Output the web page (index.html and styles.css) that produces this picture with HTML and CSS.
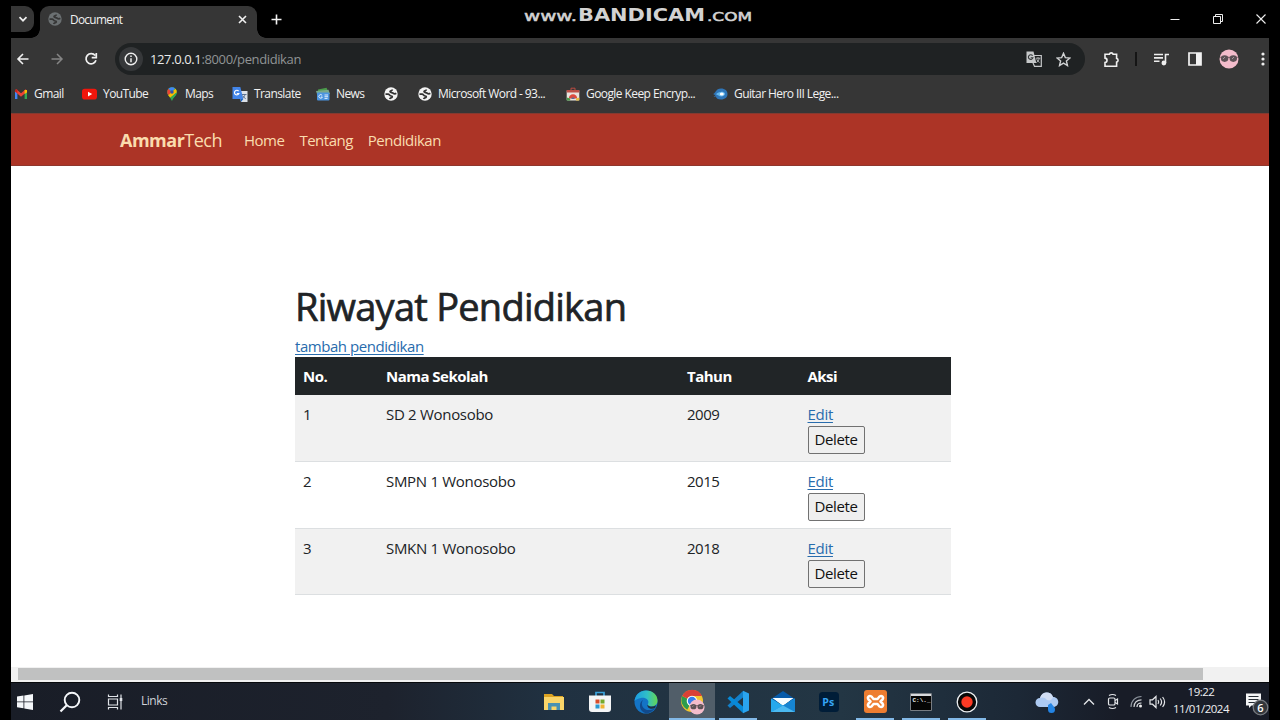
FILE: index.html
```html
<!DOCTYPE html>
<html lang="id">
<head>
<meta charset="utf-8">
<title>Document</title>
<link rel="stylesheet" href="styles.css">
</head>
<body>
<svg class="defs" aria-hidden="true">
  <defs>
    <symbol id="globe" viewBox="0 0 14 14"><circle cx="7" cy="7" r="6.700" fill="currentColor"/><path d="M1.500 7.200h2.700c1.300 0 1.400 1.700 3 1.800 1 .1 1.500.8.700 1.500-.6.600-1.900.3-2.300 1.600M12.300 6.300c-1.300.9-2.500.4-3.500-.3-1-.7-2.600-.1-2.800-1.300-.2-1 2.200-.7 2.400-2.200" fill="none" stroke="var(--cut)" stroke-width="1.700"/></symbol>
    <symbol id="glasses" viewBox="0 0 20 20"><circle cx="10" cy="10" r="9.500" fill="#f3bccb"/><path d="M1.300 8.300h17.400" stroke="#6d5058" stroke-width="1"/><ellipse cx="5.600" cy="9.600" rx="3.700" ry="3.300" fill="#5d5156"/><ellipse cx="14.300" cy="9.600" rx="3.700" ry="3.300" fill="#5d5156"/><path d="M4 10l2-2M13 10l2-2" stroke="#a99a9e"/></symbol>
  </defs>
</svg>
<div class="screen">
  <header class="tabstrip">
    <button class="tab-search"><svg width="10" height="10" viewBox="0 0 10 10"><path d="M1.500 3.200L5 6.700l3.500-3.500" fill="none" stroke="#eee" stroke-width="1.700"/></svg></button>
    <div class="tab">
      <svg class="tab-globe" width="14" height="14"><use href="#globe"/></svg>
      <span class="tab-title">Document</span>
      <svg class="tab-close" width="9" height="9" viewBox="0 0 9 9"><path d="M1 1l7 7M8 1L1 8" stroke="#f0f0f0" stroke-width="1.600"/></svg>
    </div>
    <svg class="tab-new" width="11" height="11" viewBox="0 0 11 11"><path d="M5.500.5v10M.5 5.500h10" stroke="#f2f2f2" stroke-width="1.600"/></svg>
    <svg class="watermark" width="240" height="26" viewBox="0 0 240 26"><g fill="#d2d2d2" font-family="DejaVu Sans, sans-serif" font-weight="bold"><text x="4" y="18" font-size="14" font-weight="normal" stroke="#d2d2d2" stroke-width=".5" textLength="53" lengthAdjust="spacingAndGlyphs">www.</text><text x="58" y="18" font-size="18" textLength="127" lengthAdjust="spacingAndGlyphs">BANDICAM</text><text x="187" y="18" font-size="13" font-weight="normal" stroke="#d2d2d2" stroke-width=".6" textLength="45" lengthAdjust="spacingAndGlyphs">.COM</text></g></svg>
    <div class="window-buttons">
      <svg width="12" height="12" viewBox="0 0 12 12"><path d="M1.500 6.500h9" stroke="#eee"/></svg>
      <svg width="12" height="12" viewBox="0 0 12 12"><path d="M1.500 3.500h7v7h-7zM3.500 3.500v-2h7v7h-2" fill="none" stroke="#eee"/></svg>
      <svg width="12" height="12" viewBox="0 0 12 12"><path d="M1.500 1.500l9 9M10.500 1.500l-9 9" stroke="#eee" stroke-width="1.100"/></svg>
    </div>
  </header>

  <div class="toolbar">
    <svg width="14" height="14" viewBox="0 0 14 14"><path d="M12.500 7H2.500M7 2L2 7l5 5" fill="none" stroke="#f1f1f1" stroke-width="1.600"/></svg>
    <svg width="14" height="14" viewBox="0 0 14 14"><path d="M1.500 7h10M7 2l5 5-5 5" fill="none" stroke="#858585" stroke-width="1.500"/></svg>
    <svg width="14" height="14" viewBox="0 0 14 14"><path d="M11.200 3.600A5.100 5.100 0 1 0 12 8.300M12.300 1v4.700H7.700" fill="none" stroke="#f1f1f1" stroke-width="1.700"/></svg>
    <div class="address">
      <span class="info"><svg width="14" height="14" viewBox="0 0 14 14"><circle cx="7" cy="7" r="5.800" fill="none" stroke="#eee" stroke-width="1.400"/><path d="M7 6.200v4M7 3.600v1.500" stroke="#eee" stroke-width="1.500"/></svg></span>
      <span class="url"><b>127.0.0.1</b>:8000/pendidikan</span>
      <svg class="translate" width="16" height="16" viewBox="0 0 16 16"><path d="M8 4.500h7.300v10.800H8.500L7 12" fill="none" stroke="#c6c8c9" stroke-width="1.200"/><path d="M.5.500h7l2.800 11.500H.5z" fill="#c6c8c9"/><path d="M6.600 4.800a2.300 2.300 0 1 0 .3 2H4.700" fill="none" stroke="#34383a" stroke-width="1.100"/><path d="M9.800 7.200h4.500M12 6.200v1M13.200 7.500c-.5 2-1.500 3.200-2.800 4M10.800 8.200c.4 1.300 1.400 2.500 2.700 3.200" fill="none" stroke="#c6c8c9" stroke-width=".9"/></svg>
      <svg width="15" height="15" viewBox="0 0 14 14"><path d="M7 1.200l1.700 4 4.300.4-3.300 2.800 1 4.200L7 10.400l-3.700 2.200 1-4.200L1 5.600l4.300-.4z" fill="none" stroke="#d0d2d3" stroke-width="1.300"/></svg>
    </div>
    <svg class="ext" width="17" height="17" viewBox="0 0 17 17"><path d="M2 3.300h4.400a1.900 1.900 0 0 1 3.700 0h3.500v4.100a1.900 1.900 0 0 1 0 3.700v4.100H2v-3.600c2.700-.2 2.700-4.300 0-4.500z" fill="none" stroke="#f0f0f0" stroke-width="1.600"/></svg>
    <i class="divider"></i>
    <svg class="media" width="15" height="13" viewBox="0 0 15 13"><path d="M0 1.500h9M0 4.900h9M0 8.300h5.500M11.500 10V1.500H15" fill="none" stroke="#eee" stroke-width="1.600"/><circle cx="9.900" cy="10" r="2.400" fill="#eee"/></svg>
    <svg class="panel" width="14" height="14" viewBox="0 0 14 14"><path d="M1 1h12v12H1z" fill="none" stroke="#f2f2f2" stroke-width="1.700"/><path d="M8 1h5v12H8z" fill="#f2f2f2"/></svg>
    <svg class="avatar" width="20" height="20"><use href="#glasses"/></svg>
    <svg class="kebab" width="4" height="14" viewBox="0 0 4 14" fill="#eee"><circle cx="2" cy="2" r="1.600"/><circle cx="2" cy="7" r="1.600"/><circle cx="2" cy="12" r="1.600"/></svg>
  </div>

  <nav class="bookmarks">
    <a><svg width="14" height="14" viewBox="0 0 14 14"><path d="M2.200 12V3.700" stroke="#4285f4" stroke-width="2.400"/><path d="M11.800 12V3.700" stroke="#34a853" stroke-width="2.400"/><path d="M1.500 3.200L7 8l5.500-4.800" fill="none" stroke="#ea4335" stroke-width="2.500"/><path d="M1 2.400h2.400V6L1 4.500z" fill="#c5221f"/><path d="M10.600 3h2.400v2.500L10.600 7z" fill="#fbbc04"/></svg><span>Gmail</span></a>
    <a><svg width="15" height="14" viewBox="0 0 15 14"><rect y="1.700" width="15" height="10.800" rx="2.800" fill="#f2160c"/><path d="M6 4.700v4.800L10.200 7z" fill="#fff"/></svg><span>YouTube</span></a>
    <a><svg width="14" height="14" viewBox="0 0 14 14"><path d="M7 14C6.500 10.500 2.200 9 2.200 5a4.800 4.800 0 0 1 9.600 0c0 4-4.300 5.500-4.800 9z" fill="#34a853"/><path d="M2.200 5a4.800 4.800 0 0 1 1.200-3.200L7 5 3.300 8.300C2.600 7.300 2.200 6.200 2.200 5z" fill="#ea4335"/><path d="M3.400 1.800A4.800 4.800 0 0 1 10 1.200L7 5z" fill="#4285f4"/><path d="M3.200 8.200L10.500 1.700a4.800 4.800 0 0 1 1.200 4L5.200 10.800z" fill="#fbbc04"/><path d="M5.200 10.800l6.500-5.600c.1 4-4.200 5.300-4.700 8.800-.3-1.300-.9-2.200-1.800-3.200z" fill="#34a853"/><circle cx="7" cy="5" r="1.700" fill="#3155a5"/></svg><span>Maps</span></a>
    <a><svg width="16" height="15" viewBox="0 0 16 15"><path d="M7 4h8.500v11H9z" fill="#dce1e8"/><path d="M.5 0h7.800l3 12H.5z" fill="#4285e9"/><path d="M6.600 4.200a2.300 2.300 0 1 0 .3 2.300H4.800" fill="none" stroke="#fff" stroke-width="1.100"/><path d="M10 7.500h4.500M13 7.500c-.5 2-1.500 3-2.300 3.700M10.700 8.700c.7 1.300 1.800 2.300 3 3" stroke="#5c7291" fill="none"/><path d="M8.500 12h2.800L9 15z" fill="#1764c4"/></svg><span>Translate</span></a>
    <a><svg width="14" height="14" viewBox="0 0 14 14"><path d="M2 2.500L10.500.8 12.500 6H2z" fill="#4b9b4b"/><path d="M0 4l12.500-1.200L14 7H1z" fill="#7aa98a"/><rect x="1" y="5.500" width="12.500" height="8" rx="1" fill="#4b94df"/><path d="M6.200 8.400a1.800 1.800 0 1 0 .2 1.600H5M8.500 8h3.500M8.500 9.700H12M8.500 11.400h3" fill="none" stroke="#eaf5ff" stroke-width=".9"/></svg><span>News</span></a>
    <a class="globe"><svg width="14" height="14"><use href="#globe"/></svg></a>
    <a class="globe"><svg width="14" height="14"><use href="#globe"/></svg><span>Microsoft Word - 93...</span></a>
    <a><svg width="14" height="14" viewBox="0 0 14 14"><path d="M5 3V1.200h4V3" fill="none" stroke="#bd4c42"/><rect x=".7" y="3" width="12.600" height="10.500" rx="1" fill="#e9e5df"/><path d="M.7 3h12.600v2.500H.7z" fill="#bc5148"/><path d="M2.800 11.500a4.200 4.200 0 0 1 8.400 0z" fill="#dd4c40"/><path d="M.7 10.500l3.500 1v2H.7z" fill="#4b9b4b"/><path d="M10 11.500l3.300-1v3H10z" fill="#e6bd43"/><path d="M5.300 12a1.700 1.700 0 0 1 3.400 0z" fill="#5d6f96"/></svg><span>Google Keep Encryp...</span></a>
    <a><svg width="15" height="14" viewBox="0 0 15 14"><path d="M0 7c2.500-.3 2.500-5.500 8-5.500 4 0 6.500 2.300 6.500 5.500s-2.500 5.500-6.500 5.500C5 12.500 3 11.300 3 9.500L.5 10l2-1.700z" fill="#2f76b9"/><path d="M3 7.200c2-2.500 8-3.500 9-.7.500 2.500-4 4-6.500 2z" fill="#66b9ed"/><ellipse cx="8.800" cy="7" rx="2" ry="1.500" fill="#fff"/></svg><span>Guitar Hero III Lege...</span></a>
  </nav>

  <main class="page">
    <nav class="navbar">
      <a class="brand"><b>Ammar</b>Tech</a>
      <a>Home</a>
      <a>Tentang</a>
      <a>Pendidikan</a>
    </nav>
    <section class="content">
      <h1>Riwayat Pendidikan</h1>
      <a class="link add" href="#">tambah pendidikan</a>
      <table>
        <colgroup><col class="c-no"><col class="c-name"><col class="c-year"><col class="c-act"></colgroup>
        <thead><tr><th>No.</th><th>Nama Sekolah</th><th>Tahun</th><th>Aksi</th></tr></thead>
        <tbody>
          <tr><td>1</td><td>SD 2 Wonosobo</td><td class="year">2009</td><td><a class="link" href="#">Edit</a><button>Delete</button></td></tr>
          <tr><td>2</td><td>SMPN 1 Wonosobo</td><td class="year">2015</td><td><a class="link" href="#">Edit</a><button>Delete</button></td></tr>
          <tr><td>3</td><td>SMKN 1 Wonosobo</td><td class="year">2018</td><td><a class="link" href="#">Edit</a><button>Delete</button></td></tr>
        </tbody>
      </table>
    </section>
    <div class="scrollbar"><div class="thumb"></div></div>
  </main>

  <footer class="taskbar">
    <div class="system">
      <svg width="16" height="16" viewBox="0 0 16 16" fill="#f5f7fa"><path d="M0 2.500l6.500-1v6H0zM7.300 1.400L16 0v7.500H7.300zM0 8.300h6.500v6l-6.500-1zM7.300 8.300H16V16l-8.700-1.500z"/></svg>
      <svg width="22" height="22" viewBox="0 0 22 22"><circle cx="13" cy="9" r="7.300" fill="none" stroke="#f5f7fa" stroke-width="1.900"/><path d="M7.700 14.300L1.500 20.500" stroke="#f5f7fa" stroke-width="2.200"/></svg>
      <svg width="16" height="16" viewBox="0 0 16 16" fill="none" stroke="#e0e3e8" stroke-width="1.200"><path d="M1.500.5v2h9v-2M1.500 15.500v-2h9v2M1.500 5h9v6h-9zM14 .5v15"/><path d="M14 4v3" stroke-width="2.600"/></svg>
      <span>Links</span>
    </div>
    <div class="apps">
      <a><svg width="22" height="22" viewBox="0 0 22 22"><path d="M1 3h8l2 2h9v4H1z" fill="#dca321"/><path d="M1 6h20v13H1z" fill="#fad569"/><path d="M5 19v-7h12v7h-3.500v-3.500h-5V19z" fill="#4a91b2"/></svg></a>
      <a><svg width="22" height="22" viewBox="0 0 22 22"><path d="M7 5V1.500h8V5" fill="none" stroke="#3aa2db" stroke-width="1.700"/><path d="M0 4.500h22V18q0 3-3 3H3q-3 0-3-3z" fill="#f4f5f6"/><path d="M6.500 8.500h4v4h-4z" fill="#d84d2c"/><path d="M11.500 8.500h4v4h-4z" fill="#74a92c"/><path d="M6.500 13.500h4v4h-4z" fill="#2998d2"/><path d="M11.500 13.500h4v4h-4z" fill="#efb333"/></svg></a>
      <a><svg width="24" height="24" viewBox="0 0 24 24"><defs><linearGradient id="eg"><stop stop-color="#1b9ce2"/><stop offset=".55" stop-color="#30bfc7"/><stop offset="1" stop-color="#65d74f"/></linearGradient></defs><circle cx="12" cy="12" r="11.500" fill="#1474c6"/><path d="M.5 11C1.500 4 6.500.5 12 .5c7 0 11.500 4.500 11.500 10 0 4-3 6-6.500 6-2.500 0-4-1-3-2.500 2-4-3-7-7-6-3 .5-5.500 1.500-6.500 3z" fill="url(#eg)"/><path d="M9 10c-3 4 0 11 7 10 2-.3 4-1 5.500-2.500C17 25 10 24 7.500 20.500S5.500 12 9 10z" fill="#114a8c"/><path d="M13.500 14.500c1.500 2.500 5.500 2.700 8.500.8l-.8 2.500c-3.500 2-8.500.7-7.700-3.300z" fill="#203040"/></svg></a>
      <a class="active open"><svg width="26" height="26" viewBox="0 0 26 26"><circle cx="13" cy="12" r="11" fill="#f3c62e"/><path d="M13 12L8.200 20.800A11 11 0 0 1 3.200 7z" fill="#2d9c4d"/><path d="M3.200 7A11 11 0 0 1 23 7H13v5z" fill="#da4036"/><circle cx="13" cy="12" r="5.300" fill="#fff"/><circle cx="13" cy="12" r="4.200" fill="#347ded"/><use href="#glasses" x="10" y="10" width="16" height="16"/></svg></a>
      <a class="open"><svg width="24" height="24" viewBox="0 0 24 24"><path d="M17 .7l6 2.800v17L17 23.300z" fill="#2aa4ef"/><path d="M17 1L1.500 15.500 4 18 17 7.500z" fill="#1280cb"/><path d="M17 23L1.500 8.500 4 6l13 10.500z" fill="#078ad8"/></svg></a>
      <a><svg width="24" height="22" viewBox="0 0 24 22"><path d="M0 8L12 0l12 8v3H0z" fill="#075ba9"/><path d="M2 7h20l-10 8z" fill="#f4fcff"/><path d="M0 7.500l12 7 12-7V21H0z" fill="#26a9ed"/><path d="M0 21l12-6.500L24 7.500V21z" fill="#1684d1"/><path d="M0 21l12-6.500L24 21z" fill="#4bb9f0"/><path d="M1.500 7h21L12 14z" fill="#f7fdff"/></svg></a>
      <a><svg width="22" height="22" viewBox="0 0 22 22"><rect x="1" y="1" width="20" height="20" rx="3.500" fill="#001d38"/><text x="4.300" y="14.700" fill="#35a5f5" font-family="Open Sans,sans-serif" font-weight="700" font-size="10.500">Ps</text></svg></a>
      <a class="open"><svg width="23" height="23" viewBox="0 0 23 23"><rect width="23" height="23" rx="3" fill="#ee7d30"/><path d="M7.500 6.500c-2.500-1.500-4.500 1-3 3l2 2-2 2c-1.500 2 .5 4.500 3 3l2-2.500h4l2 2.500c2.500 1.500 4.500-1 3-3l-2-2 2-2c1.500-2-.5-4.500-3-3l-2 2.500h-4z" fill="none" stroke="#fff" stroke-width="2.500" stroke-linejoin="round"/></svg></a>
      <a class="open"><svg width="22" height="18" viewBox="0 0 22 18"><path d="M.5.500h21v17H.5z" fill="#050505" stroke="#777d83"/><path d="M1 1h20v2H1z" fill="#d8dadd"/><text x="2.500" y="9" fill="#eee" font-family="Liberation Mono,monospace" font-weight="bold" font-size="6">C:\._</text></svg></a>
      <a class="open"><svg width="22" height="22" viewBox="0 0 22 22"><circle cx="11" cy="11" r="9.800" fill="#080808" stroke="#eef0f2" stroke-width="1.300"/><circle cx="11" cy="11" r="5.700" fill="#fb3a24"/></svg></a>
    </div>
    <div class="tray">
      <svg width="24" height="22" viewBox="0 0 24 22"><path d="M5 16a4.500 4.500 0 0 1 0-9C7 0 16 0 18 6c7 0 7 10 0 10z" fill="#adcaf2"/><path d="M5 7C7 0 16 0 18 6c-2 5-5 3-6 3-2-3-5-3-7-2z" fill="#d1def4"/><path d="M16 12c2 3 4 4 4 6.500a3.500 3.500 0 0 1-7 0V14z" fill="#2384e4"/></svg>
      <svg width="12" height="8" viewBox="0 0 12 8"><path d="M1 6.500L6 1.500l5 5" fill="none" stroke="#e4e6e9" stroke-width="1.300"/></svg>
      <svg width="12" height="17" viewBox="0 0 12 17" fill="none" stroke="#e4e6e9" stroke-width="1.200"><rect x="1.500" y="5" width="6.500" height="7" rx="1.300"/><path d="M8 7.500L10.500 6v5L8 9.500M2 2.500Q5.500.5 9 2.500M2 14.500q3.500 2 7 0"/></svg>
      <svg width="12" height="13" viewBox="0 0 12 13" fill="none"><g stroke="#8d949d" stroke-width="1.200"><path d="M1 12C1 5.500 5.500 1.500 11.500 1.500"/><path d="M4 12c0-4.300 3-7.200 7.500-7.200" stroke="#ced1d5"/><path d="M7 12c0-2.500 1.800-4 4.500-4" stroke="#e2e4e7"/></g><circle cx="10.500" cy="11" r="1.500" fill="#eee"/></svg>
      <svg width="17" height="14" viewBox="0 0 17 14" fill="none" stroke="#e4e6e9" stroke-width="1.200"><path d="M1 4.800h2.500L7 1.500v11L3.500 9.200H1zM9 5q1.500 2 0 4M11.200 3.500q2.800 3.500 0 7"/><path d="M13.600 2q4 5 0 10"/></svg>
      <div class="clock"><span>19:22</span><span class="date">11/01/2024</span></div>
      <svg class="notice" width="24" height="24" viewBox="0 0 24 24"><path d="M1 1.500h15v12H6.500L4 16v-2.500H1z" fill="#f3f4f5"/><path d="M3.500 4.500h10M3.500 7.500h10M3.500 10.500h7" stroke="#252b33" stroke-width="1.200"/><circle cx="15.500" cy="15.500" r="7.300" fill="#33363b" stroke="#777b81" stroke-width="1.300"/><text x="15.500" y="19.600" text-anchor="middle" font-family="Open Sans,sans-serif" font-weight="600" font-size="11" fill="#fff">6</text></svg>
    </div>
  </footer>
</div>
</body>
</html>
```

FILE: styles.css
```css
* { box-sizing: border-box; }
body { margin: 0; background: #000; font-family: "Open Sans", "Noto Sans", sans-serif; }
svg { display: block; flex: none; }
.defs { position: absolute; width: 0; height: 0; }
.screen { width: 1280px; height: 720px; padding: 0 11px; display: flex; flex-direction: column; overflow: hidden; }

.tabstrip { height: 38px; display: flex; align-items: center; flex: none; }
.tab-search { width: 23px; height: 26px; border: 0; padding: 0; background: #363636; border-radius: 0 9px 9px 0; display: grid; place-items: center; }
.tab { width: 217px; height: 32px; margin: 6px 0 0 6px; padding: 0 10px 6px 8px; background: #363636; border-radius: 9px 9px 0 0; display: flex; align-items: center; position: relative; }
.tab::before, .tab::after { content: ""; position: absolute; bottom: 0; width: 9px; height: 9px; }
.tab::before { left: -9px; background: radial-gradient(circle at 0 0, #000 8.5px, #363636 9px); }
.tab::after { right: -9px; background: radial-gradient(circle at 100% 0, #000 8.5px, #363636 9px); }
.tab-globe { color: #6b7072; --cut: #363636; }
.tab-title { margin-left: 8px; font-size: 11.800px; color: #f1f1f1; letter-spacing: -.65px; flex: 1; }
.tab-new { margin-left: 14px; }
.watermark { margin: -6px 0 0 238px; }
.window-buttons { margin-left: auto; margin-right: 2px; display: flex; gap: 31px; }

.toolbar { height: 42px; flex: none; background: #363636; display: flex; align-items: center; padding: 0 4px 0 5px; }
.toolbar > svg:nth-child(2) { margin-left: 20px; }
.toolbar > svg:nth-child(3) { margin-left: 20px; }
.address { width: 970px; height: 32px; margin-left: 17px; padding: 0 14px 0 5px; border-radius: 16px; background: #1f2223; display: flex; align-items: center; }
.info { width: 24px; height: 24px; border-radius: 50%; background: #36383a; display: grid; place-items: center; margin-left: -1px; }
.url { margin-left: 7px; font-size: 13px; color: #909495; flex: 1; letter-spacing: -.38px; }
.url b { font-weight: 400; color: #e9eaeb; }
.translate { margin-right: 14px; }
.ext { margin-left: 18px; }
.divider { width: 2px; height: 14px; background: #151515; margin-left: 15px; }
.media { margin-left: 17px; }
.panel { margin-left: 19px; }
.avatar { margin-left: 17px; }
.kebab { margin-left: auto; }

.bookmarks { height: 33px; flex: none; background: #363636; display: grid; grid-template-columns: 68px 83px 67px 84px 68px 34px 148px 147px 1fr; align-items: center; padding: 0 0 5px 3px; color: #f1f1f1; font-size: 12px; }
.bookmarks a { display: flex; align-items: center; gap: 6px; white-space: nowrap; letter-spacing: -.58px; }
.bookmarks span { margin-top: -1px; }
.globe { color: #f4f4f4; --cut: #333; }

.page { flex: none; height: 569px; background: #fff; display: flex; flex-direction: column; }
.navbar { height: 53px; flex: none; background: #ac3426; border-top: 1px solid #843a30; border-bottom: 1px solid #8f372d; padding: 0 0 0 109px; display: flex; align-items: center; color: #fadcae; font-size: 15px; }
.navbar a { margin-right: 15px; letter-spacing: -.5px; }
.navbar .brand { font-size: 18px; margin-right: 22px; letter-spacing: -.5px; }
.content { margin: 116px 0 0 284px; width: 656px; flex: 1; color: #202326; font-size: 15px; }
h1 { margin: 0; font-size: 38px; font-weight: 500; line-height: 48px; height: 54px; letter-spacing: -.75px; -webkit-text-stroke: .7px #202326; }
.link { color: #286cad; text-decoration: underline; text-decoration-thickness: 1px; text-underline-offset: 2px; display: block; width: max-content; line-height: 23px; }
.add { height: 21px; line-height: 21px; letter-spacing: -.45px; }
table { table-layout: fixed; width: 656px; border-collapse: collapse; line-height: 23px; }
.c-no { width: 83px; }
.c-name { width: 301px; }
.c-year { width: 120.5px; }
th { background: #212527; color: #fff; text-align: left; height: 38px; padding: 0 8px; font-weight: 700; letter-spacing: -.52px; }
td { height: 66.600px; padding: 8px 8px 6px; vertical-align: top; border-bottom: 1px solid #dcdfe1; letter-spacing: -.3px; }
td.year { letter-spacing: -.5px; }
tbody tr:nth-child(odd) { background: #f1f1f1; }
td button { display: block; width: 57px; height: 28px; padding: 0 0 1px; border: 1px solid #717171; border-radius: 2px; background: #efefef; font: inherit; letter-spacing: -.35px; color: #111; }
.scrollbar { height: 15px; flex: none; padding: 1px 66px 2px 7px; background: #f1f1f1; }
.thumb { height: 12px; background: #c0c1c1; }

.taskbar { height: 38px; flex: none; border-top: 1px solid #07090c; background: linear-gradient(90deg, #191d27 0%, #1d222d 30%, #203141 43%, #233644 66%, #1c2836 80%, #181c27 88%); display: flex; align-items: center; }
.system { width: 521px; display: flex; align-items: center; padding-left: 6px; color: #d0d3d8; font-size: 12px; }
.system svg:nth-child(2) { margin-left: 26px; }
.system svg:nth-child(3) { margin-left: 26px; }
.system span { margin: -2px 0 0 18px; letter-spacing: -.5px; }
.apps { width: 459px; height: 37px; display: grid; grid-template-columns: repeat(10, 45.900px); }
.apps a { display: grid; place-items: center; position: relative; }
.apps a.active { background: #515e69; }
.apps a.open::after { content: ""; position: absolute; left: 4px; right: 4px; bottom: 0; height: 2px; background: #83b9e7; }
.apps a.active::after { left: 0; right: 0; }
.tray { flex: 1; display: flex; align-items: center; padding-left: 45px; }
.tray > svg:nth-child(2) { margin-left: 24px; }
.tray > svg:nth-child(3) { margin-left: 12px; }
.tray > svg:nth-child(4) { margin-left: 11px; }
.tray > svg:nth-child(5) { margin-left: 7px; }
.clock { width: 56px; margin: -3px 0 0 7px; display: flex; flex-direction: column; align-items: center; color: #eff0f2; font-size: 11.500px; line-height: 17px; letter-spacing: -.5px; }
.tray .notice { margin: 4px 0 0 16px; }
```
